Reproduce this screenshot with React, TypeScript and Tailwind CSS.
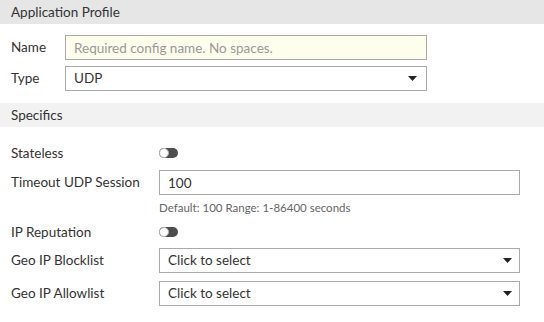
function Caret() {
    return (
        <svg width="9" height="5" viewBox="0 0 9 5" className="shrink-0">
            <path d="M0 0 H9 L4.5 5 Z" fill="#222" />
        </svg>
    )
}

function Toggle() {
    return (
        <div className="relative w-[19px] h-[10px] rounded-full bg-[#4d4d4d]">
            <div className="absolute left-0 top-0 w-[10px] h-[10px] rounded-full bg-white border border-[#b5b5b5]" />
        </div>
    )
}

function SectionHeader({ title, tone }: { title: string; tone: string }) {
    return (
        <div className={`h-6 flex items-center px-[11px] text-[13.5px] text-[#333] ${tone}`}>
            {title}
        </div>
    )
}

function SelectBox({ value, width, caretPad }: { value: string; width: string; caretPad: string }) {
    return (
        <div className={`h-[25px] ${width} border border-[#aaa] bg-white flex items-center justify-between pl-2 ${caretPad} text-[13.5px] text-[#333]`}>
            <span>{value}</span>
            <Caret />
        </div>
    )
}

export default function App() {
    return (
        <div className="w-[544px] h-[322px] bg-white overflow-hidden" style={{ fontFamily: "Lato, 'Open Sans', sans-serif" }}>
            <SectionHeader title="Application Profile" tone="bg-[#e6e6e6]" />

            <div className="px-[11px] pt-[11px] pb-3 flex flex-col gap-[6px]">
                <div className="flex items-center">
                    <span className="w-[54px] text-[13.5px] text-[#333]">Name</span>
                    <input
                        placeholder="Required config name. No spaces."
                        className="h-[25px] w-[362px] border border-[#aaa] bg-[#fefeec] px-2 text-[13.5px] text-[#333] placeholder:text-[#999] outline-none"
                    />
                </div>
                <div className="flex items-center">
                    <span className="w-[54px] text-[13.5px] text-[#333]">Type</span>
                    <SelectBox value="UDP" width="w-[362px]" caretPad="pr-[9px]" />
                </div>
            </div>

            <SectionHeader title="Specifics" tone="bg-[#f2f2f2]" />

            <div className="px-[11px] pt-4 flex flex-col text-[13.5px] text-[#333]">
                <div className="h-5 flex items-center">
                    <span className="w-[148px]">Stateless</span>
                    <Toggle />
                </div>

                <div className="mt-[7px] flex items-center">
                    <span className="w-[148px]">Timeout UDP Session</span>
                    <input
                        defaultValue="100"
                        className="h-[25px] w-[361px] border border-[#aaa] bg-white px-2 text-[13.5px] text-[#333] outline-none"
                    />
                </div>
                <div className="pl-[148px] mt-[6px] text-[11.5px] leading-[14px] text-[#666]">
                    Default: 100 Range: 1-86400 seconds
                </div>

                <div className="mt-[7px] h-5 flex items-center">
                    <span className="w-[148px]">IP Reputation</span>
                    <Toggle />
                </div>

                <div className="mt-[6px] flex items-center">
                    <span className="w-[148px]">Geo IP Blocklist</span>
                    <SelectBox value="Click to select" width="w-[361px]" caretPad="pr-[7px]" />
                </div>
                <div className="mt-[8px] flex items-center">
                    <span className="w-[148px]">Geo IP Allowlist</span>
                    <SelectBox value="Click to select" width="w-[361px]" caretPad="pr-[7px]" />
                </div>
            </div>
        </div>
    )
}
